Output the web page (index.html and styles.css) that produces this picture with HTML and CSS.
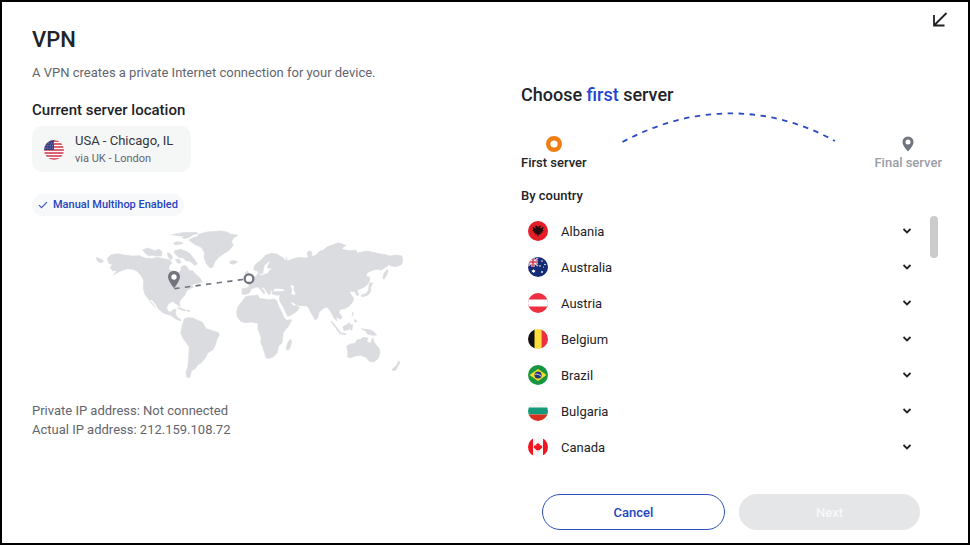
FILE: index.html
```html
<!DOCTYPE html>
<html lang="en">
<head>
<meta charset="utf-8">
<meta name="viewport" content="width=device-width, initial-scale=1">
<title>VPN</title>
<link rel="stylesheet" href="styles.css">
</head>
<body>
<main class="window">
  <button class="minimize" type="button" aria-label="Minimize">
    <svg width="16" height="16" viewBox="0 0 16 16"><path d="M14.500 1 2.500 13M2 3v10.500h10.500" fill="none" stroke="#1f2023" stroke-width="1.800"/></svg>
  </button>

  <section class="status">
    <h1 class="title">VPN</h1>
    <p class="intro">A VPN creates a private Internet connection for your device.</p>
    <h2 class="subtitle">Current server location</h2>
    <div class="location">
      <svg class="flag" viewBox="0 0 20 20"><g clip-path="url(#disc)"><path fill="#fff" d="M0 0h20v20H0z"/><path d="M0 1h20M0 4h20M0 7h20M0 10h20M0 13h20M0 16h20M0 19h20" stroke="#d0324a" stroke-width="1.600"/><path fill="#3c4282" d="M0 0h10v10H0z"/><path d="M2 3h8M1 5.500h9M1 8h9" stroke="#a9acd0" stroke-width=".8" stroke-dasharray=".8 1.600"/></g></svg>
      <div>
        <p class="location-name">USA - Chicago, IL</p>
        <p class="location-via">via UK - London</p>
      </div>
    </div>
    <p class="badge">
      <svg width="10" height="8" viewBox="0 0 10 8"><path d="M1 4.200 3.500 6.700 9 1.200" fill="none" stroke="#3a58c4" stroke-width="1.200"/></svg>
      Manual Multihop Enabled
    </p>
    <svg class="map" viewBox="0 0 960 495" role="img" aria-label="Route from London to Chicago">
      <g fill="#dbdce0" stroke="#dbdce0" stroke-width="2" stroke-linejoin="round">
        <path d="M18 113l8 1 14 8-2 5-10 0-6-5zM54 122 52 114 64 104 84 101 106 106 128 108 148 107 164 114 184 116 202 112 222 116 240 120 246 130 238 136 236 148 250 156 264 160 272 152 274 140 284 136 292 142 298 152 308 152 318 164 330 174 336 186 322 190 304 194 310 202 296 208 288 216 284 226 274 238 268 246 270 262 264 256 248 244 234 252 230 264 234 274 244 276 250 268 258 268 256 282 262 292 274 300 270 302 256 296 242 286 222 280 206 268 198 254 184 238 180 242 196 262 190 256 176 238 164 222 160 204 161 180 154 168 142 154 128 148 112 146 94 152 70 164 82 152 68 152 60 142 68 134 56 130z"/>
        <path d="M158 90l14-6 12 4 10 4 14-4 8 8-2 12-14 0-12-2-12 2-10-8zM232 98l8 2 8 12-4 8-10-10zM254 92l18-4 16 6 10 6 10 12 8 10 6 10-8 4-14-12-12-2-8-8-14-2-12-12zM256 118l12 0 6 10-10 2zM246 44l30-6 42-1 6 3-16 5-10 7-14 4-8-3 8-5-14 0zM250 70l10-5 18 3-2 4-20 2zM296 60 312 52 322 50 326 42 352 36 392 33 412 36 420 42 444 46 430 54 424 66 430 76 416 92 396 104 384 114 374 126 368 142 360 144 350 132 342 114 344 98 334 82 316 74zM418 126l8-4 14 1 2 4-12 6-8-2zM262 264l12 1 14 6-4 2-18-7zM290 270l10 3-6 3z"/>
        <path d="M282 298 292 293 310 294 320 300 336 306 344 318 348 326 368 332 386 338 388 346 380 360 376 376 368 390 354 398 346 414 334 428 322 436 316 446 304 452 302 464 298 474 290 470 288 456 294 438 296 412 298 382 290 370 280 356 272 340 276 320z"/>
        <path d="M468 229l22-2 14-2 4 10 14 2 16 2 16-2 8 8 6 18 8 16 6 14 8 8 14-2 0 4-10 18-14 16-2 18-2 14-10 8-4 20-10 12-12 6-12-1-4-14-6-20-6-12 2-14-6-16-4-10 0-18-20-4-18 2-14-4-10-14-2-16 4-14zM594 366l8-8 3 8-6 20-6 5-5-7z"/>
        <g transform="translate(450 0)">
          <path d="M6 206 6 222 16 224 28 218 34 206 44 203 52 200 60 208 68 216 72 222 75 216 66 206 64 200 74 206 82 218 88 225 93 216 90 210 98 214 96 222 112 226 120 224 118 238 122 250 130 266 140 288 150 287 168 276 179 263 168 256 160 258 150 246 158 247 172 256 200 258 206 264 214 280 226 300 233 294 237 276 252 264 262 262 270 272 276 282 282 294 290 303 289 290 302 298 306 290 297 278 300 268 314 266 328 258 338 246 341 236 332 222 328 216 343 213 352 228 356 222 351 210 368 204 380 196 388 184 389 172 378 168 382 158 394 152 408 148 424 150 440 140 446 134 456 138 468 140 484 134 488 124 486 108 466 105 450 108 438 104 420 102 400 97 380 93 366 96 352 99 348 90 330 92 316 90 304 86 318 76 306 72 294 68 280 74 262 80 250 90 238 94 230 104 216 110 215 96 208 92 201 98 205 112 196 114 180 112 164 115 150 120 140 122 140 112 136 124 130 114 110 102 94 100 76 106 64 120 50 130 43 138 42 150 54 154 60 162 68 160 70 150 72 138 84 126 92 122 84 136 82 144 98 145 88 152 84 160 72 164 62 167 54 158 50 168 40 172 32 180 24 186 28 198 20 204z"/>
          <path d="M16 158 22 152 26 160 34 172 34 180 20 180 22 170zM428 174 432 160 442 148 444 154 440 166 432 178zM388 190 398 188 392 202 392 214 386 224 370 230 362 228 366 224 380 220 386 208zM338 276l2 6-4 6zM344 298l8 6-8 2zM272 303 280 309 294 327 302 336 296 336 284 320zM298 338l20 3-2 3-18-3zM308 320 318 316 328 308 332 314 328 328 312 332zM332 316l6-2-2 16-4 0zM364 326 378 328 392 330 402 336 410 346 398 346 382 342 378 334zM320 378 330 372 346 370 350 360 362 358 370 352 384 354 380 364 392 370 398 353 402 366 408 374 418 386 420 400 414 416 402 426 388 424 378 412 362 406 346 408 330 414 322 410 324 398zM476 422l4 6-6 10-6 12-10 2-1-5 12-10z"/>
        </g>
      </g>
      <path d="M550 214l4-8 12 0 14 2 4 4-12 2-10 0zM602 194l10 4-2 10 6 10-2 8-10-4 2-12z" fill="#fff"/>
      <path d="M566 246l10 14 8 18 6 10" fill="none" stroke="#fff" stroke-width="5"/>
      <path d="M253 206 462 178" fill="none" stroke="#72747e" stroke-width="5" stroke-dasharray="16 16"/>
      <path d="M252 152a18 18 0 0 0-18 18c0 13 18 34 18 34s18-21 18-34a18 18 0 0 0-18-18z" fill="#72747e"/>
      <circle cx="252" cy="171" r="8" fill="#fff"/>
      <circle cx="477" cy="176" r="13" fill="#fff" stroke="#72747e" stroke-width="7"/>
    </svg>
    <p class="address">Private IP address: Not connected</p>
    <p class="address">Actual IP address: 212.159.108.72</p>
  </section>

  <section class="chooser">
    <h2 class="heading">Choose <span class="accent">first</span> server</h2>
    <div class="route">
      <div class="stop">
        <svg width="16" height="16" viewBox="0 0 16 16"><circle cx="8" cy="8" r="5.800" fill="#fff" stroke="#f07f13" stroke-width="4.400"/></svg>
        First server
      </div>
      <svg class="arc" width="220" height="34" viewBox="0 0 220 34"><path d="M1.500 31C70-6 145-8 214 30" fill="none" stroke="#2c4bc0" stroke-width="1.800" stroke-dasharray="5.500 5.500"/></svg>
      <div class="stop stop-final">
        <svg width="16" height="16" viewBox="0 0 16 16"><path d="M8 .5a5.500 5.500 0 0 0-5.500 5.500C2.500 10 8 15.500 8 15.500S13.500 10 13.500 6A5.500 5.500 0 0 0 8 .5z" fill="#72747e"/><circle cx="8" cy="6" r="2.500" fill="#fff"/></svg>
        Final server
      </div>
    </div>
    <h3 class="list-title">By country</h3>
    <div class="list-area">
      <ul class="countries">
        <li><button class="country" type="button"><svg class="flag" viewBox="0 0 20 20"><circle cx="10" cy="10" r="10" fill="#e41e26"/><path d="M10 6 8.500 4.500 6.500 5.500 8 6.500 7.500 7.500 4.500 5.500 5 8.500 4.500 10 6 10.500 5.500 12 7.500 11.500 7 13.500 9 13 10 16 11 13 13 13.500 12.500 11.500 14.500 12 14 10.500 15.500 10 15 8.500 15.500 5.500 12.500 7.500 12 6.500 13.500 5.500 11.500 4.500z" fill="#230c0d"/></svg><span>Albania</span><svg class="chevron" viewBox="0 0 10 6"><path d="M1.500 1 5 4.500 8.500 1"/></svg></button></li>
        <li><button class="country" type="button"><svg class="flag" viewBox="0 0 20 20"><g clip-path="url(#disc)"><path fill="#152b76" d="M0 0h20v20H0z"/><path d="M0 1 10 9M0 9 10 1" stroke="#fff" stroke-width="1.600"/><path d="M0 1 10 9M0 9 10 1" stroke="#d8344c" stroke-width=".6"/><path d="M5 0v10M0 5h10" stroke="#fff" stroke-width="3"/><path d="M5 0v10M0 5h10" stroke="#d8344c" stroke-width="1.600"/><path fill="#fff" d="M5.500 12l.6 1.200 1.400-.2-.8 1.100.8 1.100-1.400-.1-.6 1.200-.6-1.200-1.400.1.800-1.100-.8-1.100 1.400.2z"/><g fill="#fff"><circle cx="14" cy="4" r=".8"/><circle cx="17" cy="7.500" r=".8"/><circle cx="12" cy="9" r=".8"/><circle cx="14" cy="15" r=".9"/><circle cx="15.500" cy="10" r=".5"/></g></g></svg><span>Australia</span><svg class="chevron" viewBox="0 0 10 6"><path d="M1.500 1 5 4.500 8.500 1"/></svg></button></li>
        <li><button class="country" type="button"><svg class="flag" viewBox="0 0 20 20"><g clip-path="url(#disc)"><path fill="#ed2f42" d="M0 0h20v20H0z"/><path fill="#fff" d="M0 6.500h20v7H0z"/></g></svg><span>Austria</span><svg class="chevron" viewBox="0 0 10 6"><path d="M1.500 1 5 4.500 8.500 1"/></svg></button></li>
        <li><button class="country" type="button"><svg class="flag" viewBox="0 0 20 20"><g clip-path="url(#disc)"><path fill="#111" d="M0 0h7v20H0z"/><path fill="#fbdd3c" d="M6.500 0h7v20h-7z"/><path fill="#ed2f42" d="M13.500 0H20v20h-6.500z"/></g></svg><span>Belgium</span><svg class="chevron" viewBox="0 0 10 6"><path d="M1.500 1 5 4.500 8.500 1"/></svg></button></li>
        <li><button class="country" type="button"><svg class="flag" viewBox="0 0 20 20"><circle cx="10" cy="10" r="10" fill="#179641"/><path d="M10 4 18.500 10 10 16 1.500 10z" fill="#f8dc25"/><circle cx="10" cy="10" r="3.600" fill="#24377d"/><path d="M6.700 9.200c2.500-.4 4.900.3 6.500 2.100" fill="none" stroke="#fff" stroke-width=".8"/></svg><span>Brazil</span><svg class="chevron" viewBox="0 0 10 6"><path d="M1.500 1 5 4.500 8.500 1"/></svg></button></li>
        <li><button class="country" type="button"><svg class="flag" viewBox="0 0 20 20"><g clip-path="url(#disc)"><path fill="#f6f6f6" d="M0 0h20v7H0z"/><path fill="#149a78" d="M0 6.500h20v7H0z"/><path fill="#d6301f" d="M0 13.500h20V20H0z"/></g></svg><span>Bulgaria</span><svg class="chevron" viewBox="0 0 10 6"><path d="M1.500 1 5 4.500 8.500 1"/></svg></button></li>
        <li><button class="country" type="button"><svg class="flag" viewBox="0 0 20 20"><g clip-path="url(#disc)"><path fill="#f8f8f8" d="M0 0h20v20H0z"/><path fill="#f01620" d="M0 0h5v20H0zM15 0h5v20h-5zM10 5.500l1 1.700 1-.4-.3 2 1.200-.9.400.8 1.200-.2-.6 1.400.6.500-2.500 2 .1.800-1.900-.3v1.800h-.4v-1.800l-1.900.3.100-.8-2.500-2 .6-.5-.6-1.400 1.200.2.400-.8 1.200.9-.3-2 1 .4z"/></g></svg><span>Canada</span><svg class="chevron" viewBox="0 0 10 6"><path d="M1.500 1 5 4.500 8.500 1"/></svg></button></li>
      </ul>
      <div class="scroll-thumb"></div>
    </div>
    <div class="actions">
      <button class="action cancel" type="button">Cancel</button>
      <button class="action next" type="button" disabled>Next</button>
    </div>
  </section>
</main>
<svg class="defs" width="0" height="0" aria-hidden="true"><defs><clipPath id="disc"><circle cx="10" cy="10" r="10"/></clipPath></defs></svg>
</body>
</html>
```
FILE: styles.css
```css
* {
  box-sizing: border-box;
}

body,
h1,
h2,
h3,
p,
ul {
  margin: 0;
  padding: 0;
}

body {
  font-family: Roboto, "Liberation Sans", sans-serif;
  font-size: 13px;
  color: #222327;
  background: #fff;
}

svg {
  display: block;
  flex: none;
}

button {
  font: inherit;
  color: inherit;
  background: none;
  border: 0;
  padding: 0;
}

.defs {
  position: absolute;
}

.window {
  position: relative;
  display: grid;
  grid-template-columns: 489fr 421fr;
  min-height: 100vh;
  padding: 0 26px 0 30px;
  border: 2px solid #000;
}

.minimize {
  position: absolute;
  top: 10px;
  right: 20px;
}

.status {
  padding-top: 24px;
}

.title {
  font-size: 22px;
  font-weight: 500;
  line-height: 28px;
}

.intro {
  margin-top: 9px;
  line-height: 20px;
  color: #63656e;
}

.subtitle {
  margin-top: 17px;
  font-size: 15px;
  font-weight: 500;
  line-height: 20px;
}

.location {
  display: flex;
  align-items: center;
  gap: 11px;
  width: fit-content;
  margin-top: 6px;
  padding: 6px 18px 5px 12px;
  border-radius: 10px;
  background: #f5f7f7;
}

.flag {
  width: 20px;
  height: 20px;
}

.location-name {
  line-height: 18px;
  color: #33353b;
}

.location-via {
  font-size: 11px;
  line-height: 17px;
  color: #63656e;
}

.badge {
  display: flex;
  align-items: center;
  gap: 5px;
  width: fit-content;
  margin-top: 22px;
  padding: 0 6px;
  border-radius: 11px;
  background: #f7f8f9;
  font-size: 11px;
  font-weight: 500;
  line-height: 22px;
  color: #2444c0;
}

.map {
  width: 66%;
  max-width: 320px;
  margin: 4px 0 16px 58px;
}

.address {
  line-height: 19px;
  color: #63656e;
}

.chooser {
  display: flex;
  flex-direction: column;
  padding-top: 81px;
}

.heading {
  font-size: 18px;
  font-weight: 500;
  line-height: 24px;
}

.accent {
  color: #2444d0;
}

.route {
  display: flex;
  justify-content: space-between;
  align-items: flex-start;
  margin-top: 4px;
}

.stop {
  display: flex;
  flex-direction: column;
  align-items: center;
  gap: 2px;
  padding-top: 25px;
  font-weight: 500;
  line-height: 18px;
}

.stop-final {
  color: #9b9da6;
}

.list-title {
  margin-top: 14px;
  font-size: 13px;
  font-weight: 500;
  line-height: 20px;
}

.list-area {
  display: flex;
  gap: 18px;
  height: 258px;
  margin-top: 7px;
  padding-right: 4px;
}

.countries {
  flex: 1;
  overflow-y: auto;
  scrollbar-width: none;
  list-style: none;
}

.country {
  display: flex;
  align-items: center;
  gap: 13px;
  width: 100%;
  height: 36px;
  padding-left: 7px;
}

.chevron {
  width: 10px;
  height: 6px;
  margin-left: auto;
  fill: none;
  stroke: #222327;
  stroke-width: 1.8;
}

.scroll-thumb {
  width: 8px;
  height: 42px;
  margin-top: 3px;
  border-radius: 4px;
  background: #cbcbcb;
}

.actions {
  display: flex;
  gap: 14px;
  margin-top: 23px;
  padding: 0 22px 13px 21px;
}

.action {
  flex: 1;
  height: 36px;
  border-radius: 18px;
  font-weight: 500;
}

.cancel {
  border: 1px solid #2f51b5;
  color: #2444c0;
}

.next {
  background: #e5e6e8;
  color: #f8f8f9;
}
```
